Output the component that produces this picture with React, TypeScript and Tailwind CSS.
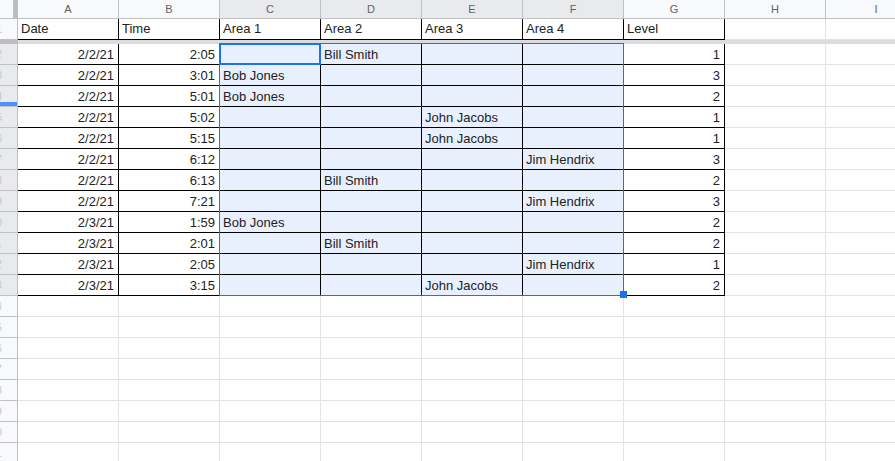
import React from 'react';

const COLS = ['A', 'B', 'C', 'D', 'E', 'F', 'G', 'H', 'I'];
const SELECTED_COLS = ['C', 'D', 'E', 'F'];

// [date, time, area1, area2, area3, area4, level]
const ROWS: string[][] = [
  ['2/2/21', '2:05', '', 'Bill Smith', '', '', '1'],
  ['2/2/21', '3:01', 'Bob Jones', '', '', '', '3'],
  ['2/2/21', '5:01', 'Bob Jones', '', '', '', '2'],
  ['2/2/21', '5:02', '', '', 'John Jacobs', '', '1'],
  ['2/2/21', '5:15', '', '', 'John Jacobs', '', '1'],
  ['2/2/21', '6:12', '', '', '', 'Jim Hendrix', '3'],
  ['2/2/21', '6:13', '', 'Bill Smith', '', '', '2'],
  ['2/2/21', '7:21', '', '', '', 'Jim Hendrix', '3'],
  ['2/3/21', '1:59', 'Bob Jones', '', '', '', '2'],
  ['2/3/21', '2:01', '', 'Bill Smith', '', '', '2'],
  ['2/3/21', '2:05', '', '', '', 'Jim Hendrix', '1'],
  ['2/3/21', '3:15', '', '', 'John Jacobs', '', '2'],
];

const HEADERS = ['Date', 'Time', 'Area 1', 'Area 2', 'Area 3', 'Area 4', 'Level'];

// row numbers are mostly hidden: the header column is narrowed, only a sliver shows
function RowNum({ n, selected }: { n: number; selected?: boolean }) {
  return (
    <div
      className={`w-[18px] shrink-0 border-r border-b border-[#c0c0c0] flex overflow-hidden ${
        selected ? 'bg-[#e8eaed]' : 'bg-[#f8f9fa]'
      }`}
    >
      <div className="w-[2px] shrink-0 flex justify-end overflow-hidden">
        <span className="shrink-0 text-[11px] leading-[20px] text-[#c4c7cb]">{n}</span>
      </div>
      <div className="flex-1" />
    </div>
  );
}

export default function App() {
  return (
    <div
      className="relative w-[895px] h-[461px] overflow-hidden bg-white text-[#222222]"
      style={{ fontFamily: '"Liberation Sans", Arial, sans-serif' }}
    >
      {/* column letters */}
      <div className="flex h-[19px] w-max">
        <div className="w-[18px] shrink-0 flex border-b border-[#c0c0c0]">
          <div className="flex-1 bg-[#f8f9fa]" />
          <div className="w-[5px] bg-[#bdbdbd]" />
        </div>
        {COLS.map((c) => (
          <div
            key={c}
            className={`w-[101px] shrink-0 border-r border-b border-[#c0c0c0] text-center text-[11px] leading-[18px] text-[#5f6368] ${
              SELECTED_COLS.includes(c) ? 'bg-[#e8eaed]' : 'bg-[#f8f9fa]'
            }`}
          >
            {c}
          </div>
        ))}
      </div>

      {/* header row */}
      <div className="flex h-[21px] w-max">
        <RowNum n={1} />
        {COLS.map((c, i) => (
          <div
            key={c}
            className={`w-[101px] shrink-0 border-r border-b pl-[3px] text-[13px] leading-[20px] ${
              i < 7 ? 'border-black' : 'border-[#e2e2e2]'
            }`}
          >
            {HEADERS[i] ?? ''}
          </div>
        ))}
      </div>

      {/* frozen row divider */}
      <div className="flex h-[4px] w-max">
        <div className="w-[18px] shrink-0 bg-[#bdbdbd]" />
        <div className="w-[909px] bg-[#dadce0]" />
      </div>

      {ROWS.map((r, ri) => (
        <div key={ri} className="flex h-[21px] w-max">
          <RowNum n={ri + 2} selected />
          {COLS.map((c, i) => {
            const val = r[i] ?? '';
            const right = i < 2 || i === 6;
            return (
              <div
                key={c}
                className={`w-[101px] shrink-0 border-r border-b text-[13px] leading-[20px] pt-[1px] whitespace-nowrap overflow-hidden ${
                  i < 7 ? 'border-black' : 'border-[#e2e2e2]'
                } ${i >= 2 && i <= 5 ? 'bg-[#e8f0fe]' : ''} ${
                  right ? 'text-right pr-[4px]' : 'pl-[3px]'
                }`}
              >
                {val}
              </div>
            );
          })}
        </div>
      ))}

      {Array.from({ length: 8 }).map((_, ri) => (
        <div key={ri} className="flex h-[21px] w-max">
          <RowNum n={ri + 14} />
          {COLS.map((c) => (
            <div key={c} className="w-[101px] shrink-0 border-r border-b border-[#e2e2e2]" />
          ))}
        </div>
      ))}

      {/* selection range */}
      <div className="absolute left-[219px] top-[43px] w-[405px] h-[253px] border border-[#1a73e8] pointer-events-none" />
      {/* active cell */}
      <div className="absolute left-[219px] top-[43px] w-[102px] h-[22px] border-2 border-[#1a73e8] pointer-events-none" />
      {/* fill handle */}
      <div className="absolute left-[620px] top-[291px] w-[7px] h-[7px] bg-[#1a73e8]" />
      {/* row header marker */}
      <div className="absolute left-0 top-[102px] w-[17px] h-[4px] bg-[#4d90fe]" />
    </div>
  );
}
